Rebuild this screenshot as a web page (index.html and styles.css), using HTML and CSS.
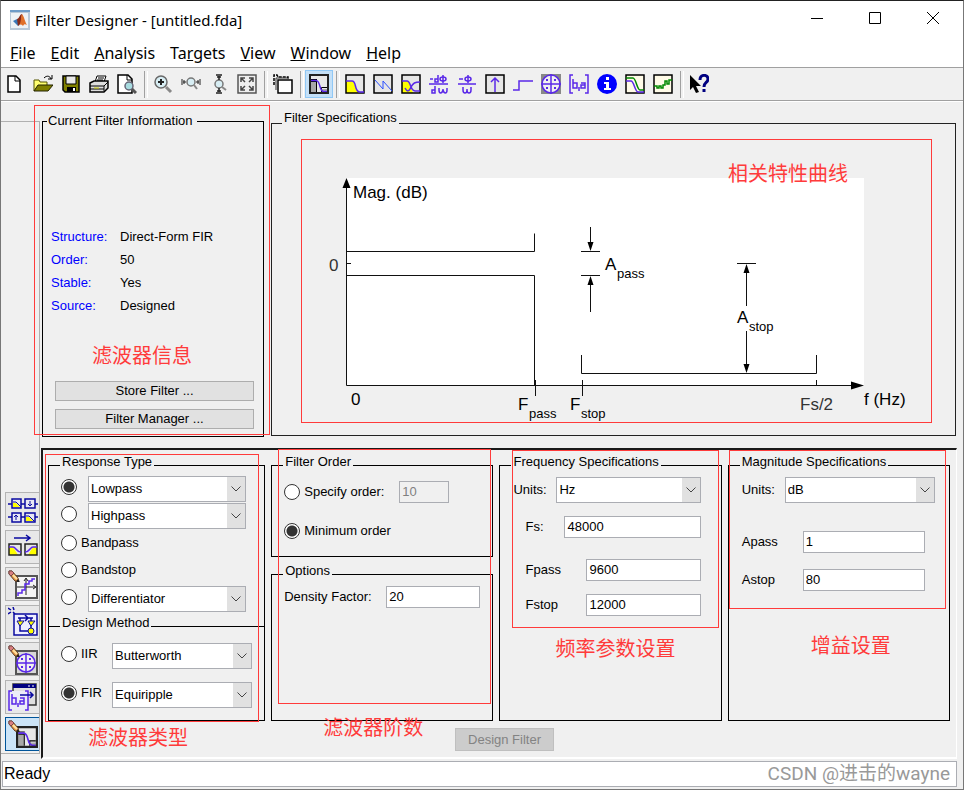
FILE: index.html
```
<!DOCTYPE html>
<html lang="zh-CN">
<head>
    <meta charset="UTF-8">
    <meta name="viewport" content="width=device-width, initial-scale=1.0">
    <title>Filter Designer - [untitled.fda]</title>
    <link rel="stylesheet" href="styles.css">
</head>
<body>
    <!-- shared drawings -->
    <svg class="defs" width="0" height="0">
        <symbol id="pencil" viewBox="0 0 12 12">
            <path d="M1 1h3l6 7 1 4-4-1-6-7z" fill="#e89a4a" stroke="#5a3a20"/>
            <path d="M1 1h3l2 2-3 3-2-2z" fill="#d98080" stroke="#7a4a4a"/>
            <path d="M5 5l4 4" stroke="#ffe0a0" stroke-width="2"/>
            <path d="M9 10l2 2" stroke="#222" stroke-width="2"/>
        </symbol>
        <symbol id="zplane" viewBox="0 0 20 20">
            <g fill="none" stroke="#5a28e8" stroke-width="1.5">
                <circle cx="10" cy="10" r="9" fill="#f0f0f0"/>
                <path d="M10 0v20M0 10h20"/>
                <path d="M5 5l2 2M7 5l-2 2M13 5l2 2M15 5l-2 2M13 13l2 2M15 13l-2 2M5 13l2 2M7 13l-2 2" stroke-width="1"/>
            </g>
        </symbol>
        <symbol id="design" viewBox="0 0 20 20">
            <path d="M1 1h18v18H1z" fill="#e8e8e8"/>
            <path d="M2 8h5v10H2zM13 15h5v3h-5z" fill="#a8a8a8"/>
            <path d="M2 5.500h6M2 7.500h6M7.500 8v10M12.500 18v-4.500H18" fill="none" stroke="#000"/>
            <path d="M2 6.500h5c2 0 3 2 4 6s2 5 4 5h3" fill="none" stroke="#5a28e8" stroke-width="1.5"/>
            <path d="M1 1h18v18H1z" fill="none" stroke="#222" stroke-width="2"/>
        </symbol>
    </svg>

    <div class="window">
        <header class="title-bar">
            <svg class="logo" viewBox="0 0 20 20">
                <path d="M0 0h20v20H0z" fill="#b8c8d8"/>
                <path d="M1 3h17v15H1z" fill="#eef2f6"/>
                <path d="M0 0h20v2H0z" fill="#6f9cc8"/>
                <path d="M3 11l4-2 4 4-3 3z" fill="#3a78b8"/>
                <path d="M7 9c2 0 3-5 5-5l-1 9-3 3z" fill="#8a2a18"/>
                <path d="M12 4c2 2 3 8 5 11-2-1-3-1-4 1-1-1-2-3-4 0 2-3 2-10 3-12z" fill="#e0702a"/>
            </svg>
            <h1>Filter Designer - [untitled.fda]</h1>
            <div class="window-buttons">
                <button aria-label="Minimize"><svg viewBox="0 0 12 12"><path d="M0 6.5h12"/></svg></button>
                <button aria-label="Maximize"><svg viewBox="0 0 12 12"><path d="M.5.5h11v11H.5z"/></svg></button>
                <button aria-label="Close"><svg viewBox="0 0 12 12"><path d="M0 0l12 12M12 0L0 12"/></svg></button>
            </div>
        </header>

        <nav class="menu-bar">
            <a href="#"><u>F</u>ile</a>
            <a href="#"><u>E</u>dit</a>
            <a href="#"><u>A</u>nalysis</a>
            <a href="#">Ta<u>r</u>gets</a>
            <a href="#"><u>V</u>iew</a>
            <a href="#"><u>W</u>indow</a>
            <a href="#"><u>H</u>elp</a>
        </nav>

        <div class="toolbar">
            <button aria-label="New"><svg viewBox="0 0 20 20"><path d="M3 2h8l4 4v12H3z" fill="#fff" stroke="#000" stroke-width="1.5"/><path d="M10 2v5h5" fill="none" stroke="#000"/></svg></button>
            <button aria-label="Open"><svg viewBox="0 0 20 20"><path d="M1 17V6h5l1 2h7v3" fill="#ffff70" stroke="#555500"/><path d="M1 17l4-6h15l-5 6z" fill="#808000" stroke="#222200"/><path d="M11 4c3-3 6-2 7 1M15 5h4V1" fill="none" stroke="#000"/></svg></button>
            <button aria-label="Save"><svg viewBox="0 0 20 20"><path d="M2 2h16v16H4l-2-2z" fill="#808000" stroke="#000" stroke-width="1.5"/><path d="M5 2h10v8H5z" fill="#e8e8e8" stroke="#000"/><path d="M6 13h9v5H6z" fill="#000"/><path d="M12 14h2v3h-2z" fill="#fff"/></svg></button>
            <button aria-label="Print"><svg viewBox="0 0 20 20"><path d="M6 8l2-6h9l-2 6" fill="#fff" stroke="#000"/><path d="M9 4h6M8 6h6" stroke="#000"/><path d="M1 9l4-2h14v7l-4 4H1z" fill="#ddd" stroke="#000" stroke-width="1.5"/><path d="M1 12h14l4-4M1 15h14M15 12v5" fill="none" stroke="#000"/><path d="M5 14h5" stroke="#cc0"/></svg></button>
            <button aria-label="Print preview"><svg viewBox="0 0 20 20"><path d="M1 1h10l4 4v14H1z" fill="#fff" stroke="#000" stroke-width="1.5"/><path d="M10 1v5h5" fill="none" stroke="#000"/><circle cx="12" cy="12" r="4" fill="#a8dce0" stroke="#667" stroke-width="1.5"/><path d="M15 15l4 4" stroke="#555" stroke-width="3"/></svg></button>
            <span class="separator"></span>
            <button aria-label="Zoom in"><svg viewBox="0 0 20 20"><circle cx="8" cy="8" r="6" fill="#d8eef4" stroke="#6a6a6a" stroke-width="1.5"/><path d="M8 5v6M5 8h6" stroke="#222" stroke-width="2"/><path d="M13 13l5 5" stroke="#888" stroke-width="3"/></svg></button>
            <button aria-label="Zoom X"><svg viewBox="0 0 20 20"><circle cx="10" cy="8" r="4" fill="#d8eef4" stroke="#777" stroke-width="1.5"/><path d="M13 11l3 4" stroke="#888" stroke-width="2"/><path d="M1 5v6M19 5v6M2 8h3M15 8h3M3 6v4M17 6v4" stroke="#222"/></svg></button>
            <button aria-label="Zoom Y"><svg viewBox="0 0 20 20"><circle cx="10" cy="10" r="4" fill="#d8eef4" stroke="#777" stroke-width="1.5"/><path d="M13 13l4 3" stroke="#888" stroke-width="2"/><path d="M7 1h6M7 19h6M10 2v4M10 14v4M8 3h4M8 17h4" stroke="#222" stroke-width="1.5"/></svg></button>
            <button aria-label="Full view"><svg viewBox="0 0 20 20"><path d="M1 1h18v18H1z" fill="#eee" stroke="#555" stroke-width="1.5"/><path d="M4 8V4h4M12 4h4v4M16 12v4h-4M8 16H4v-4M4 4l4 4M16 4l-4 4M16 16l-4-4M4 16l4-4" fill="none" stroke="#444" stroke-width="1.5"/></svg></button>
            <span class="separator"></span>
            <button aria-label="Full view analysis"><svg viewBox="0 0 20 20"><path d="M1 3V1h3l1 2h10v2M1 4v8" fill="none" stroke="#000" stroke-width="1.5" stroke-dasharray="3 1"/><path d="M3 16V4h11" fill="none" stroke="#333"/><path d="M5 6h14v13H5z" fill="#fff" stroke="#000" stroke-width="1.5"/></svg></button>
            <span class="separator"></span>
            <button class="active" aria-label="Filter specifications"><svg viewBox="0 0 20 20"><use href="#design"/></svg></button>
            <span class="separator"></span>
            <button aria-label="Magnitude response"><svg viewBox="0 0 20 20"><path d="M1 1h18v18H1z" fill="#e6e6e6"/><path d="M1 7h7l5 12H1z" fill="#ff0"/><path d="M1 1h18v18H1z" fill="none" stroke="#000" stroke-width="1.5"/><path d="M1 7h6c3 0 3 4 4 7s2 4 4 4h4" fill="none" stroke="#5a28e8" stroke-width="1.5"/></svg></button>
            <button aria-label="Phase response"><svg viewBox="0 0 20 20"><path d="M1 1h18v18H1z" fill="#e6e6e6" stroke="#000" stroke-width="1.5"/><path d="M2 6l8 9V7l9 10" fill="none" stroke="#2a50ff"/></svg></button>
            <button aria-label="Magnitude and phase"><svg viewBox="0 0 20 20"><path d="M1 1h18v18H1z" fill="#e6e6e6"/><path d="M1 7h7l4 12H1z" fill="#ff0"/><path d="M1 1h18v18H1z" fill="none" stroke="#000" stroke-width="1.5"/><path d="M1 7h5c4 0 3 10 8 10h5M4 14c2 4 4 4 6-1 2-4 4-5 9-5" fill="none" stroke="#5a28e8" stroke-width="1.5"/></svg></button>
            <button aria-label="Group delay"><svg viewBox="0 0 20 20"><g fill="none" stroke="#5a28e8" stroke-width="1.5"><path d="M0 10h19M1 5h3M9 1v7H6V5h3M14 1v8M6 12v7H3v-3h3"/><ellipse cx="14" cy="5" rx="3" ry="2"/><path d="M10 14v2c0 4 3 4 4 0v-1 1c1 4 4 4 4 0v-2"/></g></svg></button>
            <button aria-label="Phase delay"><svg viewBox="0 0 20 20"><g fill="none" stroke="#5a28e8" stroke-width="1.5"><path d="M1 10h18M2 5h4M11 1v8"/><ellipse cx="11" cy="5" rx="3" ry="2"/><path d="M6 13v3c0 4 4 4 4 0v-1 1c0 4 4 4 4 0v-3"/></g></svg></button>
            <button aria-label="Impulse response"><svg viewBox="0 0 20 20"><path d="M1 1h18v18H1z" fill="#e6e6e6" stroke="#000" stroke-width="1.5"/><path d="M10 18V4M6 8l4-4 4 4" fill="none" stroke="#5a28e8" stroke-width="1.5"/></svg></button>
            <button aria-label="Step response"><svg viewBox="0 0 20 20"><path d="M0 16h6V7h14" fill="none" stroke="#5a28e8" stroke-width="1.5"/></svg></button>
            <button aria-label="Pole/zero plot"><svg viewBox="0 0 20 20"><path d="M0 0h20v20H0z" fill="#888"/><use href="#zplane"/></svg></button>
            <button aria-label="Filter coefficients"><svg viewBox="0 0 20 20"><path d="M4 1H1v18h3M16 1h3v18h-3M4 5v9h4V9H4M10 13v4M12 9h4v5h-4v-3h4" fill="none" stroke="#5a28e8" stroke-width="1.5"/></svg></button>
            <button aria-label="Filter information"><svg viewBox="0 0 20 20"><circle cx="10" cy="10" r="10" fill="#00f"/><path d="M9 3h3v3H9zM7 8h5v6h2v2H7v-2h2v-4H7z" fill="#fff"/></svg></button>
            <button aria-label="Magnitude response estimate"><svg viewBox="0 0 20 20"><path d="M1 1h18v18H1z" fill="#fffbe8" stroke="#000" stroke-width="1.5"/><path d="M1 7h5c3 0 4 11 7 11h6" fill="none" stroke="#5a28e8" stroke-width="1.5"/><path d="M1 4h7c3 0 4 12 7 12h4" fill="none" stroke="#080" stroke-width="1.5"/></svg></button>
            <button aria-label="Round-off noise"><svg viewBox="0 0 20 20"><path d="M1 1h18v18H1z" fill="#fffbe8" stroke="#000" stroke-width="1.5"/><path d="M1 12h3v2h2v-2h2v2h2v-3h2V7h2v3h2V6h3" fill="none" stroke="#080" stroke-width="1.5"/></svg></button>
            <span class="separator"></span>
            <button aria-label="What's this?"><svg viewBox="0 0 20 20"><path d="M1 1v15l3-3 3 6 3-1-3-6h5z" fill="#000"/><path d="M11 6c0-6 8-6 8-1 0 4-4 3-4 8M15 15v3" fill="none" stroke="#000080" stroke-width="3"/></svg></button>
        </div>

        <div class="workspace">
            <aside class="rail">
                <div class="rail-buttons">
                    <button aria-label="Create a multirate filter"><svg viewBox="0 0 30 30">
                        <path d="M0 9h30M0 22h30" stroke="#0a0aa0" stroke-width="1.5"/>
                        <path d="M4 4h9v9H4zM17 4h10v9H17zM4 18h9v9H4zM17 18h10v9H17z" fill="#e8e8f4" stroke="#0a0aa0" stroke-width="1.5"/>
                        <path d="M5 8h3l4 4H5zM18 22h3l4 4h-7z" fill="#ff0"/>
                        <path d="M5 7h3l5 5M18 21h3l5 5M22 6v5M20 9l2 2 2-2M8 25v-5M6 22l2-2 2 2" fill="none" stroke="#0a0aa0"/>
                    </svg></button>
                    <button aria-label="Transform filter"><svg viewBox="0 0 30 30">
                        <path d="M6 6h16M18 3l4 3-4 3" fill="none" stroke="#0a0aa0" stroke-width="1.5"/>
                        <path d="M1 12h12v11H1zM17 12h12v11H17z" fill="#e6e6e6"/>
                        <path d="M1 15h4l5 8H1zM29 15h-4l-5 8h9z" fill="#ff0"/>
                        <path d="M1 12h12v11H1zM17 12h12v11H17z" fill="none" stroke="#222" stroke-width="1.5"/>
                        <path d="M1 15h4c3 0 3 5 8 5M29 15h-4c-3 0-3 5-8 5" fill="none" stroke="#5a28e8" stroke-width="1.5"/>
                    </svg></button>
                    <button aria-label="Set quantization parameters"><svg viewBox="0 0 30 30">
                        <path d="M8 6h21v22H8z" fill="#f4f4f4" stroke="#555" stroke-width="2"/>
                        <path d="M18 9v16M9 17h18M16 11l2-3 2 3M25 15l3 2-3 2" fill="none" stroke="#222"/>
                        <path d="M10 26v-3h4v-3h3v-6h4v-3h3V9h3" fill="none" stroke="#5a28e8" stroke-width="1.5"/>
                        <use href="#pencil" width="12" height="12"/>
                    </svg></button>
                    <button aria-label="Realize model"><svg viewBox="0 0 30 30">
                        <path d="M0 1l3 2M5 0l1 3M0 7l3-2M7 7L5 5" stroke="#0a0aa0" stroke-width="1.5"/>
                        <path d="M6 7h23v21H6z" fill="#eef" stroke="#0a0aa0" stroke-width="1.5"/>
                        <path d="M10 11h15M12 11v13h12M23 11v11M17 8l3 3-3 3" fill="none" stroke="#0a0aa0" stroke-width="1.5"/>
                        <path d="M9 14h7l-4 5zM20 14h7l-4 5z" fill="#ff0" stroke="#0a0aa0"/>
                        <circle cx="23" cy="24" r="3" fill="#ff0" stroke="#0a0aa0"/>
                    </svg></button>
                    <button aria-label="Pole/zero editor"><svg viewBox="0 0 30 30">
                        <path d="M8 6h21v23H8z" fill="#d8d8d8" stroke="#555" stroke-width="2"/>
                        <use href="#zplane" x="8" y="8" width="20" height="20"/>
                        <use href="#pencil" width="12" height="12"/>
                    </svg></button>
                    <button aria-label="Import filter"><svg viewBox="0 0 30 30">
                        <path d="M5 2h23v21H5z" fill="#e0e0e0" stroke="#333" stroke-width="1.5"/>
                        <path d="M5 2h23v4H5z" fill="#000080"/>
                        <path d="M20 4h2M24 4h2" stroke="#fff"/>
                        <path d="M1 9h19v19H1z" fill="#ececf8"/>
                        <path d="M4 9H1v19h3M17 9h3v19h-3M4 12v10h4v-6H4M10 21v4M12 16h4v6h-4v-3h4" fill="none" stroke="#5a28e8" stroke-width="1.5"/>
                        <path d="M12 13h13M22 10l3 3-3 3" fill="none" stroke="#0a0aa0" stroke-width="1.5"/>
                    </svg></button>
                    <button class="active" aria-label="Design filter"><svg viewBox="0 0 30 30">
                        <use href="#design" x="8" y="6" width="22" height="22"/>
                        <use href="#pencil" width="12" height="12"/>
                    </svg></button>
                </div>
            </aside>

            <main>
                <section class="upper">
                    <div class="cell info">
                        <fieldset>
                            <legend>Current Filter Information</legend>
                            <dl>
                                <dt>Structure:</dt><dd>Direct-Form FIR</dd>
                                <dt>Order:</dt><dd>50</dd>
                                <dt>Stable:</dt><dd>Yes</dd>
                                <dt>Source:</dt><dd>Designed</dd>
                            </dl>
                            <div class="info-buttons">
                                <button>Store Filter ...</button>
                                <button>Filter Manager ...</button>
                            </div>
                        </fieldset>
                        <div class="mark"></div>
                        <p class="note">滤波器信息</p>
                    </div>

                    <div class="cell specs">
                        <fieldset>
                            <legend>Filter Specifications</legend>
                            <svg class="plot" viewBox="272 136 683 299">
                                <path d="M346 178h518v207H346z" fill="#fff"/>
                                <g class="lines">
                                    <!-- axes and ticks -->
                                    <path d="M346.5 180v205.5H860"/>
                                    <path d="M346 263.5h5M535.5 380v16M582.5 380v16M816.5 380v6"/>
                                    <!-- passband and stopband limits -->
                                    <path d="M346.5 233v18.500h188v-18M346.5 275.5h188v110"/>
                                    <path d="M581.5 355v18.500h235v-18.500"/>
                                    <!-- Apass and Astop dimensions -->
                                    <path d="M581 251.5h19M581 275.5h19M590.5 227v20M590.5 280v32"/>
                                    <path d="M737 263.5h19M746.5 268v38M746.5 331v38"/>
                                </g>
                                <path d="M346.5 178l4 10h-8zM864 385.5l-13-4v8zM590.5 251l-3-9h6zM590.5 276l-3 9h6zM746.5 264l-3 9h6zM746.5 373l-3-9h6z"/>
                                <text x="353" y="198">Mag. (dB)</text>
                                <text x="329" y="271" class="tick">0</text>
                                <text x="351" y="405">0</text>
                                <text x="518" y="410">F</text>
                                <text x="529" y="418" class="sub">pass</text>
                                <text x="570" y="410">F</text>
                                <text x="581" y="418" class="sub">stop</text>
                                <text x="605" y="270">A</text>
                                <text x="617" y="278" class="sub">pass</text>
                                <text x="737" y="323">A</text>
                                <text x="749" y="331" class="sub">stop</text>
                                <text x="800" y="410" class="tick">Fs/2</text>
                                <text x="864" y="405">f (Hz)</text>
                            </svg>
                        </fieldset>
                        <div class="mark"></div>
                        <p class="note">相关特性曲线</p>
                    </div>
                </section>

                <section class="lower">
                    <div class="panels">
                        <div class="cell response">
                            <fieldset class="types">
                                <legend>Response Type</legend>
                                <div class="row combo">
                                    <input type="radio" name="type" aria-label="Lowpass" checked>
                                    <select aria-label="Lowpass type"><option>Lowpass</option></select>
                                </div>
                                <div class="row combo">
                                    <input type="radio" name="type" aria-label="Highpass">
                                    <select aria-label="Highpass type"><option>Highpass</option></select>
                                </div>
                                <div class="row">
                                    <input type="radio" name="type" id="bandpass"><label for="bandpass">Bandpass</label>
                                </div>
                                <div class="row">
                                    <input type="radio" name="type" id="bandstop"><label for="bandstop">Bandstop</label>
                                </div>
                                <div class="row combo last">
                                    <input type="radio" name="type" aria-label="Other">
                                    <select aria-label="Other type"><option>Differentiator</option></select>
                                </div>
                            </fieldset>
                            <fieldset class="methods">
                                <legend>Design Method</legend>
                                <div class="row combo">
                                    <input type="radio" name="method" id="iir"><label for="iir">IIR</label>
                                    <select aria-label="IIR method"><option>Butterworth</option></select>
                                </div>
                                <div class="row combo">
                                    <input type="radio" name="method" id="fir" checked><label for="fir">FIR</label>
                                    <select aria-label="FIR method"><option>Equiripple</option></select>
                                </div>
                            </fieldset>
                            <div class="mark"></div>
                            <p class="note">滤波器类型</p>
                        </div>

                        <div class="cell order">
                            <fieldset class="order-type">
                                <legend>Filter Order</legend>
                                <div class="row">
                                    <input type="radio" name="order" id="specify"><label for="specify">Specify order:</label>
                                    <input type="text" aria-label="Order" value="10" disabled>
                                </div>
                                <div class="row">
                                    <input type="radio" name="order" id="minimum" checked><label for="minimum">Minimum order</label>
                                </div>
                            </fieldset>
                            <fieldset class="options">
                                <legend>Options</legend>
                                <div class="row">
                                    <label for="density">Density Factor:</label>
                                    <input type="text" id="density" value="20">
                                </div>
                            </fieldset>
                            <div class="mark"></div>
                            <p class="note">滤波器阶数</p>
                        </div>

                        <div class="cell frequency">
                            <fieldset>
                                <legend>Frequency Specifications</legend>
                                <div class="row units">
                                    <label for="freq-units">Units:</label>
                                    <select id="freq-units"><option>Hz</option></select>
                                </div>
                                <div class="row fs"><label for="fs">Fs:</label><input type="text" id="fs" value="48000"></div>
                                <div class="row fpass"><label for="fpass">Fpass</label><input type="text" id="fpass" value="9600"></div>
                                <div class="row fstop"><label for="fstop">Fstop</label><input type="text" id="fstop" value="12000"></div>
                            </fieldset>
                            <div class="mark"></div>
                            <p class="note">频率参数设置</p>
                        </div>

                        <div class="cell magnitude">
                            <fieldset>
                                <legend>Magnitude Specifications</legend>
                                <div class="row units">
                                    <label for="mag-units">Units:</label>
                                    <select id="mag-units"><option>dB</option></select>
                                </div>
                                <div class="row apass"><label for="apass">Apass</label><input type="text" id="apass" value="1"></div>
                                <div class="row astop"><label for="astop">Astop</label><input type="text" id="astop" value="80"></div>
                            </fieldset>
                            <div class="mark"></div>
                            <p class="note">增益设置</p>
                        </div>
                    </div>
                    <div class="actions">
                        <button disabled>Design Filter</button>
                    </div>
                </section>
            </main>
        </div>

        <footer class="status">
            <span>Ready</span>
            <span class="watermark">CSDN @进击的wayne</span>
        </footer>
    </div>
</body>
</html>
```
FILE: styles.css
```
* {
    box-sizing: border-box;
}
body {
    margin: 0;
    font: 13px/16px "Liberation Sans", Arial, "Noto Sans CJK SC", sans-serif;
    color: #000;
    background: #f0f0f0;
}
button, input, select {
    margin: 0;
    font: inherit;
    color: inherit;
}
.defs {
    position: absolute;
}
.window {
    display: flex;
    flex-direction: column;
    min-height: 100vh;
    border: 1px solid #777;
    border-top-color: #222;
}

/* title and menu */
.title-bar {
    display: flex;
    align-items: center;
    height: 37px;
    padding: 0 1px 0 9px;
    background: #fff;
}
.logo {
    width: 20px;
    height: 20px;
    margin-right: 5px;
}
.title-bar h1 {
    flex: 1;
    margin: 0;
    font: 15px/20px "Noto Sans", sans-serif;
}
.window-buttons {
    display: flex;
}
.window-buttons button {
    width: 58px;
    height: 36px;
    padding: 0;
    border: none;
    background: none;
}
.window-buttons svg {
    width: 12px;
    height: 12px;
    fill: none;
    stroke: #000;
}
.menu-bar {
    display: flex;
    align-items: center;
    gap: 15px;
    height: 29px;
    padding-left: 9px;
    background: #fff;
    font: 16px/20px "Noto Sans", sans-serif;
}
.menu-bar a {
    color: #000;
    text-decoration: none;
}

/* toolbar */
.toolbar {
    display: flex;
    align-items: center;
    height: 34px;
    border-top: 1px solid #a0a0a0;
    border-bottom: 1px solid #a0a0a0;
}
.toolbar button {
    width: 28px;
    height: 28px;
    padding: 3px;
    border: 1px solid transparent;
    background: none;
}
.toolbar button.active {
    border-color: #90c8f6;
    background: #c4e0f7;
}
.toolbar svg {
    display: block;
    width: 20px;
    height: 20px;
}
.separator {
    width: 8px;
    height: 27px;
    padding-left: 3px;
}
.separator::before {
    content: "";
    display: block;
    width: 2px;
    height: 100%;
    border-left: 1px solid #a0a0a0;
    border-right: 1px solid #fff;
}

/* left rail */
.workspace {
    display: flex;
    flex: 1;
    border-top: 1px solid #fff;
}
.rail {
    display: flex;
    flex-direction: column;
    justify-content: flex-end;
    width: 39px;
    margin: 19px 1px 5px 0;
    padding-bottom: 2px;
    border: 1px solid #b0b0b0;
    border-left: none;
}
.rail-buttons {
    display: flex;
    flex-direction: column;
    justify-content: space-between;
    height: 259px;
    padding-left: 4px;
}
.rail-buttons button {
    height: 34px;
    padding: 1px 0 0 2px;
    border: 1px solid #b4b4b4;
    border-right: none;
    background: #e8e8e8;
}
.rail-buttons button.active {
    border-color: #005499;
    background: #cce4f7;
}
.rail-buttons svg {
    display: block;
    width: 30px;
    height: 30px;
}

/* panels */
main {
    flex: 1;
    display: flex;
    flex-direction: column;
}
.cell {
    position: relative;
    display: flex;
    flex-direction: column;
    min-width: 0;
}
fieldset {
    flex: 1;
    min-width: 0;
    margin: 0;
    padding: 0 12px;
    border: 1px solid #000;
}
legend {
    margin-left: -1px;
    padding: 0 2px 6px;
    white-space: nowrap;
}
.upper {
    display: grid;
    grid-template-columns: 222fr 685fr;
    gap: 7px;
    padding: 8px 7px 11px 1px;
}
.info {
    padding-top: 3px;
}
.info fieldset {
    padding: 100px 8px 7px;
}
.info legend {
    margin-left: -4px;
    padding: 0 4px 0 1px;
}
dl {
    display: grid;
    grid-template-columns: 69px 1fr;
    gap: 7px 0;
    margin: 0 0 67px;
}
dt {
    color: #00f;
}
dd {
    margin: 0;
}
.info-buttons {
    display: flex;
    flex-direction: column;
    gap: 8px;
    padding: 0 1px 0 4px;
}
.info-buttons button, .actions button {
    height: 20px;
    padding: 0;
    border: 1px solid #adadad;
    background: #e1e1e1;
}
.specs fieldset {
    margin-bottom: 1px;
    padding: 0;
    border-color: #222;
}
.specs legend {
    margin-left: 10px;
    padding-bottom: 10px;
}
.plot {
    display: block;
    width: 100%;
}
.plot .lines {
    fill: none;
    stroke: #111;
}
.plot text {
    font-size: 17px;
}
.plot .sub {
    font-size: 13px;
}
.plot .tick {
    fill: #333;
}

.lower {
    flex: 1;
    margin-right: 6px;
    padding: 4px 6px 6px 5px;
    border: 2px solid #fff;
    border-width: 2px 1px 2px 2px;
    border-top-color: #1a1a1a;
    border-left-color: #1a1a1a;
}
.panels {
    display: grid;
    grid-template-columns: 217fr 222fr 222fr 222fr;
    gap: 6px;
}
.row {
    display: flex;
    align-items: center;
}
.types {
    flex: none;
    height: 172px;
    padding-right: 18px;
    border-bottom: none;
}
.types .row {
    height: 26px;
    margin-bottom: 1px;
}
.types .row.last {
    margin-top: 3px;
}
.types select {
    margin-left: 7px;
}
.methods {
    margin-top: -11px;
    padding: 6px 12px 12px;
}
.methods .row + .row {
    margin-top: 13px;
}
.methods label {
    width: 31px;
}
.combo input, .combo label {
    margin-bottom: 4px;
}
.order {
    gap: 6px;
}
.order-type {
    flex: none;
    padding-top: 5px;
    padding-bottom: 14px;
}
.order-type .row {
    height: 22px;
}
.order-type .row + .row {
    margin-top: 17px;
}
.order-type label {
    width: 95px;
    white-space: nowrap;
}
.order-type input[type="text"] {
    flex: 0 1 50px;
}
.options .row {
    padding-top: 1px;
}
.options label {
    width: 102px;
}
.frequency fieldset {
    padding-right: 20px;
    padding-left: 13px;
}
.frequency legend, .magnitude legend {
    margin-left: -2px;
}
.magnitude fieldset {
    padding-right: 14px;
    padding-left: 13px;
}
.units {
    padding-top: 1px;
}
.units label {
    width: 43px;
}
.fs, .fpass, .fstop {
    margin-top: 13px;
    padding-left: 12px;
}
.fs label {
    width: 39px;
}
.fpass {
    margin-top: 21px;
}
.fpass label, .fstop label, .apass label, .astop label {
    width: 61px;
}
.apass, .astop {
    margin-top: 28px;
    padding-right: 10px;
}
.astop {
    margin-top: 16px;
}

/* controls */
label {
    flex: none;
}
input[type="text"] {
    flex: 1;
    min-width: 0;
    height: 22px;
    padding: 0 2px 2px;
    border: 1px solid #abadb3;
    background: #fff;
}
input[type="text"]:disabled {
    background: #f0f0f0;
    color: #808080;
}
input[type="radio"] {
    appearance: none;
    flex: none;
    width: 16px;
    height: 16px;
    margin-right: 4px;
    border: 1px solid #333;
    border-radius: 50%;
    background: #fff;
}
input[type="radio"]:checked {
    background: radial-gradient(circle, #333 5px, #fff 6px);
}
select {
    appearance: none;
    flex: 1;
    min-width: 0;
    height: 26px;
    padding: 0 20px 0 2px;
    border: 1px solid #abadb3;
    border-radius: 0;
    background:
        url("data:image/svg+xml,%3Csvg xmlns='http://www.w3.org/2000/svg' width='10' height='6'%3E%3Cpath d='M.5.5L5 5 9.5.5' fill='none' stroke='%23444'/%3E%3C/svg%3E") no-repeat right 4px center,
        linear-gradient(#e1e1e1, #e1e1e1) no-repeat right / 18px 100%,
        #fff;
}
.actions {
    display: flex;
    justify-content: center;
    padding: 7px 0 0 11px;
}
.actions button {
    width: 99px;
    height: 23px;
    border-color: #bfbfbf;
    background: #ccc;
    color: #838383;
}

/* red annotations laid over the panels */
.mark {
    position: absolute;
    border: 1px solid #ff3b3b;
    pointer-events: none;
}
.note {
    position: absolute;
    margin: 0;
    font: 20px/20px "Noto Sans CJK SC", sans-serif;
    color: #ff3b3b;
    white-space: nowrap;
}
.info .mark {
    inset: -5px -6px 2px -8px;
}
.info .note {
    top: 235px;
    left: 50px;
}
.specs .mark {
    inset: 29px 24px 14px 30px;
}
.specs .note {
    top: 53px;
    right: 108px;
}
.response .mark {
    inset: 0 6px -1px -3px;
}
.response .note {
    top: 273px;
    left: 40px;
}
.order .mark {
    inset: -5px 2px 17px 7px;
}
.order .note {
    top: 263px;
    left: 52px;
}
.frequency .mark {
    inset: -4px 3px 93px 13px;
}
.frequency .note {
    top: 184px;
    left: 56px;
}
.magnitude .mark {
    inset: -4px 4px 112px 1px;
}
.magnitude .note {
    top: 181px;
    left: 83px;
}

/* status bar */
.status {
    display: flex;
    align-items: center;
    justify-content: space-between;
    height: 26px;
    margin: 2px 6px 2px 1px;
    padding: 0 6px 0 1px;
    border: 1px solid #abadb3;
    background: #fff;
    font-size: 16px;
}
.watermark {
    font: 19px/20px Roboto, "Noto Sans CJK SC", sans-serif;
    color: #999;
}
```
